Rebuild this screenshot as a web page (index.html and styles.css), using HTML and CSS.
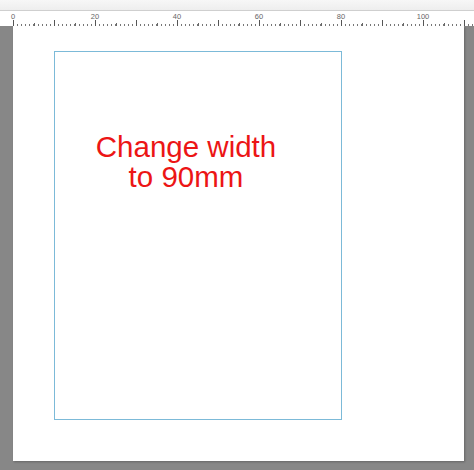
FILE: index.html
```
<!DOCTYPE html>
<html>
<head>
<meta charset="utf-8">
<link rel="stylesheet" href="styles.css">
</head>
<body>
<div class="topbar"></div>
<div class="ruler">
  <div class="labels">
    <span>0</span><span>20</span><span>40</span><span>60</span><span>80</span><span>100</span>
  </div>
  <div class="ticks"></div>
</div>
<div class="workspace">
  <div class="page">
    <div class="frame">
      <div class="note">Change width<br>to 90mm</div>
    </div>
  </div>
</div>
</body>
</html>
```
FILE: styles.css
```
html, body {
  margin: 0;
  padding: 0;
}
body {
  width: 474px;
  height: 470px;
  background: #878787;
  font-family: "Liberation Sans", Arial, sans-serif;
  overflow: hidden;
}
.topbar {
  height: 10px;
  background: linear-gradient(#f7f7f7, #eeeeee);
  border-bottom: 1px solid #cfcfcf;
}
.ruler {
  height: 15px;
  background: #ffffff;
  position: relative;
  overflow: hidden;
}
.labels {
  display: flex;
  margin-left: -28px;
  padding-top: 1px;
  height: 9px;
}
.labels span {
  flex: 0 0 82px;
  text-align: center;
  font-size: 7.5px;
  line-height: 9px;
  color: #666666;
}
.ticks {
  margin-left: 13px;
  margin-top: -1px;
  height: 6px;
  background:
    repeating-linear-gradient(to right, #555 0 1px, transparent 1px 41px) bottom left / 100% 6px no-repeat,
    repeating-linear-gradient(to right, #666 0 1px, transparent 1px 20.5px) bottom left / 100% 3px no-repeat,
    repeating-linear-gradient(to right, #777 0 1px, transparent 1px 4.1px) bottom left / 100% 2px no-repeat;
}
.workspace {
  padding: 0 10px 9px 13px;
}
.page {
  height: 435px;
  background: #ffffff;
  padding: 25px 0 0 41px;
  box-sizing: border-box;
  box-shadow: 1px 1px 2px rgba(0,0,0,0.25);
}
.frame {
  width: 288px;
  height: 369px;
  box-sizing: border-box;
  border: 1px solid #7cbad8;
  padding: 80px 0 0 38px;
}
.note {
  width: 186px;
  text-align: center;
  color: #ec1515;
  font-size: 29.5px;
  line-height: 30px;
}
```
